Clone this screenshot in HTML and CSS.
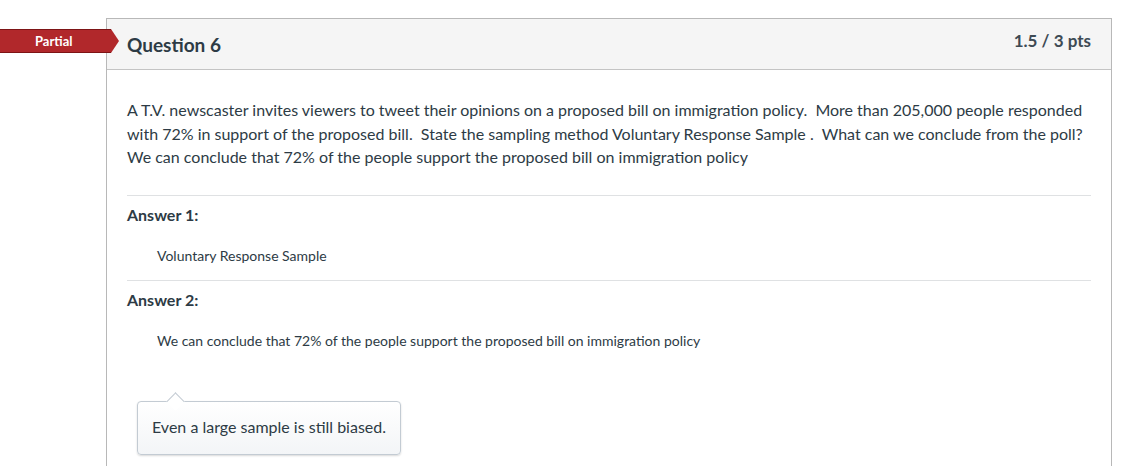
FILE: index.html
```html
<!DOCTYPE html>
<html>
<head>
<meta charset="utf-8">
<link rel="stylesheet" href="styles.css">
</head>
<body>
<div class="page">
  <div class="badge">Partial</div>
  <div class="question">
    <div class="q-header">
      <span class="q-title">Question 6</span>
      <span class="q-pts">1.5 / 3 pts</span>
    </div>
    <div class="q-body">
      <div class="q-text">A T.V. newscaster invites viewers to tweet their opinions on a proposed bill on immigration policy.&nbsp; More than 205,000 people responded with 72% in support of the proposed bill.&nbsp; State the sampling method Voluntary Response Sample .&nbsp; What can we conclude from the poll? We can conclude that 72% of the people support the proposed bill on immigration policy</div>
      <div class="answer">
        <div class="a-label">Answer 1:</div>
        <div class="a-value">Voluntary Response Sample</div>
      </div>
      <div class="answer">
        <div class="a-label">Answer 2:</div>
        <div class="a-value">We can conclude that 72% of the people support the proposed bill on immigration policy</div>
      </div>
      <div class="comment">Even a large sample is still biased.</div>
    </div>
  </div>
</div>
</body>
</html>
```
FILE: styles.css
```css
html, body {
  margin: 0;
  padding: 0;
  background: #fff;
  font-family: Lato, "Noto Sans", sans-serif;
  color: #2d3b45;
  overflow: hidden;
}
.page {
  position: relative;
  padding: 18px 21px 0 106px;
  height: 448px;
}
.badge {
  position: absolute;
  left: 0;
  top: 29px;
  width: 111px;
  height: 24px;
  box-sizing: border-box;
  background: #b1282b;
  border-top: 1px solid #7d1416;
  border-bottom: 1px solid #7d1416;
  color: #fff;
  font-size: 13px;
  font-weight: 700;
  line-height: 22px;
  padding-left: 35px;
  z-index: 2;
}
.badge::after {
  content: "";
  position: absolute;
  right: -8px;
  top: -1px;
  width: 0;
  height: 0;
  border-top: 12px solid transparent;
  border-bottom: 12px solid transparent;
  border-left: 8px solid #b1282b;
}
.question {
  border: 1px solid #b8b8b8;
  border-bottom: none;
  height: 100%;
}
.q-header {
  background: #f5f5f5;
  border-bottom: 1px solid #c4c4c4;
  height: 50px;
  display: flex;
  justify-content: space-between;
  align-items: flex-start;
  padding: 0 20px;
}
.q-title {
  font-size: 19px;
  font-weight: 700;
  margin-top: 14px;
  color: #2d3b45;
}
.q-pts {
  font-size: 17px;
  font-weight: 700;
  margin-top: 11px;
  color: #3d4a54;
}
.q-body {
  padding: 0 20px;
}
.q-text {
  font-size: 16px;
  line-height: 23.5px;
  padding: 28px 0 26px;
  border-bottom: 1px solid #dfe1e3;
}
.answer + .answer {
  border-top: 1px solid #dfe1e3;
}
.a-label {
  font-size: 16px;
  font-weight: 700;
  padding-top: 10px;
  line-height: 18px;
}
.a-value {
  font-size: 14px;
  padding: 23px 0 15px 30px;
  line-height: 18px;
}
.comment {
  position: relative;
  display: inline-block;
  margin: 36px 0 0 10px;
  padding: 0 14px;
  height: 52px;
  line-height: 50px;
  font-size: 16px;
  border: 1px solid #c3cbd3;
  border-radius: 4px;
  background: linear-gradient(#ffffff, #f3f5f7);
  box-shadow: 0 1px 2px rgba(0,0,0,0.15);
}
.comment::before {
  content: "";
  position: absolute;
  left: 31px;
  top: -10px;
  width: 12px;
  height: 12px;
  background: #fff;
  border-left: 1px solid #c3cbd3;
  border-top: 1px solid #c3cbd3;
  transform: translateY(3px) rotate(45deg);
}
```
